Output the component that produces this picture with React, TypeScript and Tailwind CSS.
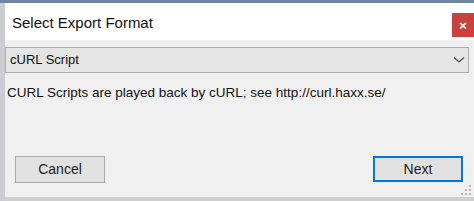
import { FC } from 'react';

const Chevron: FC = () => (
    <svg width="12" height="8" viewBox="0 0 12 8" fill="none">
        <path d="M1 1.5 L6 6 L11 1.5" stroke="#555" strokeWidth="1.3" />
    </svg>
);

const App: FC = () => {
    return (
        <div className="flex h-[201px] w-[474px] flex-col overflow-hidden bg-[#9aa6b4]" style={{ fontFamily: '"Liberation Sans", Arial, sans-serif' }}>
            {/* desktop behind the dialog */}
            <div className="h-[3px] w-full bg-[#6f84a0]" />
            <div className="flex flex-1">
                <div className="w-[5px] bg-[#c9ccd0]" />
                <div className="flex flex-1 flex-col">
                    {/* title bar */}
                    <div className="flex h-[37px] items-start justify-between bg-white">
                        <span className="mt-[11px] pl-[7px] text-[15px] leading-[18px] text-[#111]">Select Export Format</span>
                        <div className="mt-[10px] flex h-[24px] w-[22px] items-center justify-center bg-[#c9423e] text-[13px] font-bold leading-none text-white">×</div>
                    </div>

                    {/* content */}
                    <div className="relative flex flex-1 flex-col bg-[#f0f0f0] pr-[5px] pt-[7px]">
                        <div className="flex h-[26px] items-center justify-between border border-[#adadad] bg-[#e5e5e5] pl-[4px] pr-[3px]">
                            <span className="text-[13px] text-[#111]">cURL Script</span>
                            <Chevron />
                        </div>
                        <p className="mt-[12px] pl-[2px] text-[13.5px] leading-[16px] text-[#111]">
                            CURL Scripts are played back by cURL; see http://curl.haxx.se/
                        </p>

                        <div className="mt-auto mb-[14px] flex justify-between pl-[10px] pr-[6px]">
                            <button className="h-[27px] w-[90px] border border-[#adadad] bg-[#e1e1e1] text-[14px] text-[#1e1e1e]">Cancel</button>
                            <button className="h-[26px] w-[90px] border-2 border-[#0078d7] bg-[#e1e1e1] text-[14px] text-[#1e1e1e]">Next</button>
                        </div>

                        {/* size grip */}
                        <svg className="absolute bottom-[2px] right-[3px]" width="10" height="10" viewBox="0 0 10 10">
                            <rect x="8" y="0" width="2" height="2" fill="#b8b8b8" />
                            <rect x="4" y="4" width="2" height="2" fill="#b8b8b8" />
                            <rect x="8" y="4" width="2" height="2" fill="#b8b8b8" />
                            <rect x="0" y="8" width="2" height="2" fill="#b8b8b8" />
                            <rect x="4" y="8" width="2" height="2" fill="#b8b8b8" />
                            <rect x="8" y="8" width="2" height="2" fill="#b8b8b8" />
                        </svg>
                    </div>
                    <div className="h-[4px] bg-[#cfcfcf]" />
                </div>
            </div>
        </div>
    );
};

export default App;
